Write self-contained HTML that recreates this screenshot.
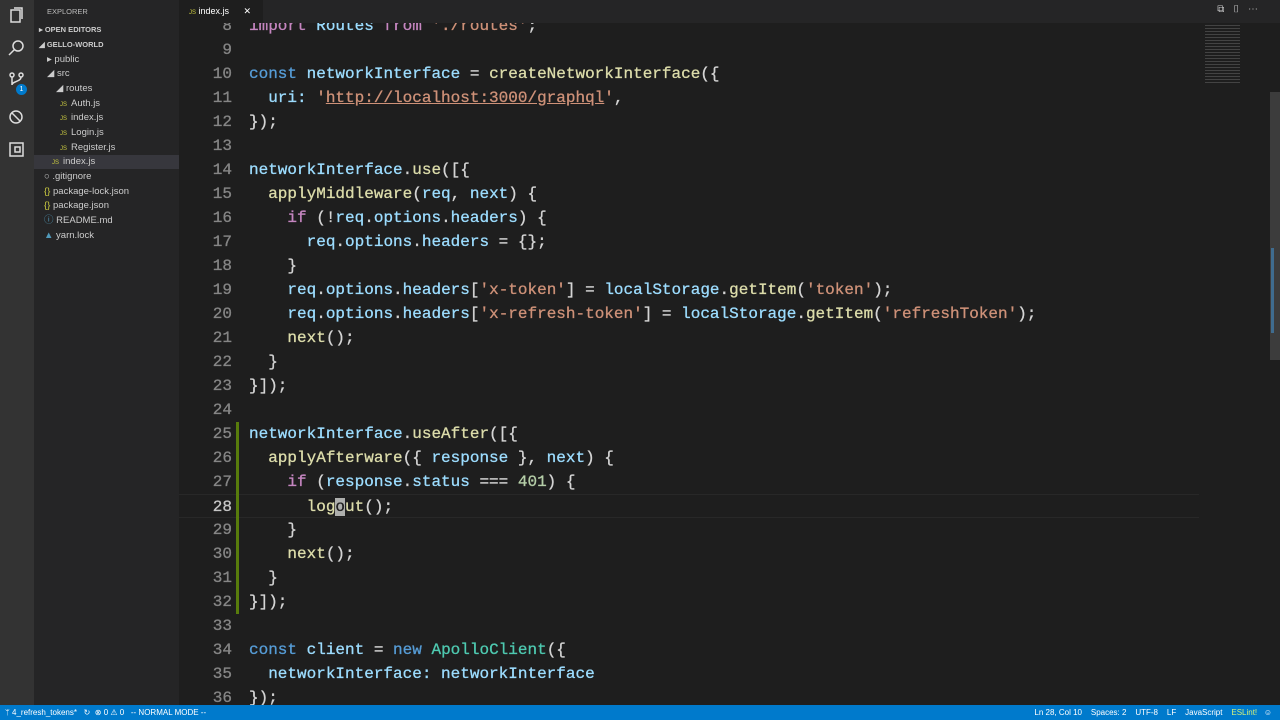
<!DOCTYPE html>
<html><head><meta charset="utf-8"><style>
*{margin:0;padding:0;box-sizing:border-box}
body{width:1280px;height:720px;overflow:hidden;background:#1e1e1e;font-family:"Liberation Sans",sans-serif;position:relative}
#act{position:absolute;left:0;top:0;width:34px;height:705px;background:#333}
#side{position:absolute;left:34px;top:0;width:145px;height:705px;background:#252526;color:#ccc;font-size:9.5px}
#side div{position:absolute;white-space:nowrap;height:14px;line-height:14px}
.j{color:#cbcb41;font-size:6px;margin-right:4px}
#tabs{position:absolute;left:179px;top:0;width:1101px;height:23px;background:#252526}
#tab{position:absolute;left:0;top:0;width:84px;height:23px;background:#1e1e1e;color:#fff;font-size:9px;line-height:23px;padding-left:10px}
#code{position:absolute;left:179px;top:14px;width:1020px;font-family:"Liberation Mono",monospace;font-size:16px;line-height:24px;color:#d4d4d4;-webkit-text-stroke:0.3px currentColor}
.l{height:24px;white-space:pre;position:relative}
.n{display:inline-block;width:53px;text-align:right;color:#858585;margin-right:17px}
.k{color:#569cd6}.v{color:#9cdcfe}.f{color:#dcdcaa}.s{color:#ce9178}.p{color:#c586c0}.m{color:#b5cea8}.c{color:#4ec9b0}
#status{position:absolute;left:0;top:705px;width:1280px;height:15px;background:#007acc;color:#fff;font-size:8px;line-height:15px}
</style></head><body>
<div id="act">
<svg width="34" height="170" fill="none" stroke="#ddd" stroke-width="1.5">
<rect x="11" y="10" width="9" height="12"/><path d="M14 8h8v11"/>
<circle cx="18" cy="46" r="5"/><path d="M14 50l-5 5"/>
<circle cx="12" cy="75" r="2"/><circle cx="21" cy="75" r="2"/><path d="M12 77v8M21 77c0 5-9 4-9 8"/>
<circle cx="16" cy="117" r="6"/><path d="M12 113l8 8"/>
<rect x="10" y="143" width="13" height="13"/><rect x="15" y="147" width="5" height="5"/>
</svg>
<div style="position:absolute;left:16px;top:84px;width:11px;height:11px;border-radius:50%;background:#007acc;color:#fff;font-size:7px;text-align:center;line-height:11px">1</div>
</div>
<div id="side">
<div style="left:13px;top:5px;color:#bbb;font-size:7.5px">EXPLORER</div>
<div style="left:5px;top:23px;font-weight:bold;font-size:7.5px">▸ OPEN EDITORS</div>
<div style="left:5px;top:38px;font-weight:bold;font-size:7.5px">◢ GELLO-WORLD</div>
<div style="left:13px;top:53px">▸ public</div>
<div style="left:13px;top:67px">◢ src</div>
<div style="left:22px;top:82px">◢ routes</div>
<div style="left:26px;top:97px"><span class="j">JS</span>Auth.js</div>
<div style="left:26px;top:111px"><span class="j">JS</span>index.js</div>
<div style="left:26px;top:126px"><span class="j">JS</span>Login.js</div>
<div style="left:26px;top:141px"><span class="j">JS</span>Register.js</div>
<div style="left:0;top:155px;width:145px;background:#37373d;padding-left:18px"><span class="j">JS</span>index.js</div>
<div style="left:10px;top:170px">○ .gitignore</div>
<div style="left:10px;top:185px"><span style="color:#cbcb41">{}</span> package-lock.json</div>
<div style="left:10px;top:199px"><span style="color:#cbcb41">{}</span> package.json</div>
<div style="left:10px;top:214px"><span style="color:#519aba">ⓘ</span> README.md</div>
<div style="left:10px;top:229px"><span style="color:#519aba">▲</span> yarn.lock</div>
</div>
<div id="code">
<div class="l"><span class="n">8</span><span class="p">import</span> <span class="v">Routes</span> <span class="p">from</span> <span class="s">'./routes'</span>;</div>
<div class="l"><span class="n">9</span></div>
<div class="l"><span class="n">10</span><span class="k">const</span> <span class="v">networkInterface</span> = <span class="f">createNetworkInterface</span>({</div>
<div class="l"><span class="n">11</span>  <span class="v">uri:</span> <span class="s">'<u>http://localhost:3000/graphql</u>'</span>,</div>
<div class="l"><span class="n">12</span>});</div>
<div class="l"><span class="n">13</span></div>
<div class="l"><span class="n">14</span><span class="v">networkInterface</span>.<span class="f">use</span>([{</div>
<div class="l"><span class="n">15</span>  <span class="f">applyMiddleware</span>(<span class="v">req</span>, <span class="v">next</span>) {</div>
<div class="l"><span class="n">16</span>    <span class="p">if</span> (!<span class="v">req</span>.<span class="v">options</span>.<span class="v">headers</span>) {</div>
<div class="l"><span class="n">17</span>      <span class="v">req</span>.<span class="v">options</span>.<span class="v">headers</span> = {};</div>
<div class="l"><span class="n">18</span>    }</div>
<div class="l"><span class="n">19</span>    <span class="v">req</span>.<span class="v">options</span>.<span class="v">headers</span>[<span class="s">'x-token'</span>] = <span class="v">localStorage</span>.<span class="f">getItem</span>(<span class="s">'token'</span>);</div>
<div class="l"><span class="n">20</span>    <span class="v">req</span>.<span class="v">options</span>.<span class="v">headers</span>[<span class="s">'x-refresh-token'</span>] = <span class="v">localStorage</span>.<span class="f">getItem</span>(<span class="s">'refreshToken'</span>);</div>
<div class="l"><span class="n">21</span>    <span class="f">next</span>();</div>
<div class="l"><span class="n">22</span>  }</div>
<div class="l"><span class="n">23</span>}]);</div>
<div class="l"><span class="n">24</span></div>
<div class="l"><span class="n">25</span><span class="v">networkInterface</span>.<span class="f">useAfter</span>([{</div>
<div class="l"><span class="n">26</span>  <span class="f">applyAfterware</span>({ <span class="v">response</span> }, <span class="v">next</span>) {</div>
<div class="l"><span class="n">27</span>    <span class="p">if</span> (<span class="v">response</span>.<span class="v">status</span> === <span class="m">401</span>) {</div>
<div class="l" style="border-top:1px solid #282828;border-bottom:1px solid #282828"><span class="n" style="color:#c6c6c6">28</span>      <span class="f">log<span style="background:#aeafad;color:#1e1e1e">o</span>ut</span>();</div>
<div class="l"><span class="n">29</span>    }</div>
<div class="l"><span class="n">30</span>    <span class="f">next</span>();</div>
<div class="l"><span class="n">31</span>  }</div>
<div class="l"><span class="n">32</span>}]);</div>
<div class="l"><span class="n">33</span></div>
<div class="l"><span class="n">34</span><span class="k">const</span> <span class="v">client</span> = <span class="k">new</span> <span class="c">ApolloClient</span>({</div>
<div class="l"><span class="n">35</span>  <span class="v">networkInterface:</span> <span class="v">networkInterface</span></div>
<div class="l"><span class="n">36</span>});</div>
</div>
<div style="position:absolute;left:236px;top:422px;width:3px;height:192px;background:#587c0c"></div>
<div id="tabs"><div id="tab"><span style="color:#cbcb41;font-size:6px">JS</span> index.js <span style="margin-left:12px">✕</span></div>
<div style="position:absolute;right:14px;top:4px;color:#ccc;font-size:10px;letter-spacing:8px">⧉▯⋯</div></div>
<div style="position:absolute;left:1205px;top:23px;width:50px;height:60px;opacity:.35;background:repeating-linear-gradient(#1e1e1e 0 2px,#888 2px 3px);clip-path:polygon(0 0,70% 0,70% 100%,0 100%)"></div>
<div style="position:absolute;left:1270px;top:92px;width:10px;height:268px;background:#3c3c3c"></div>
<div style="position:absolute;left:1271px;top:248px;width:3px;height:85px;background:#3f6c8f"></div>
<div id="status">
<span style="position:absolute;left:5px">ᛘ 4_refresh_tokens*&nbsp;&nbsp; ↻ &nbsp;⊗ 0 ⚠ 0 &nbsp;&nbsp;-- NORMAL MODE --</span>
<span style="position:absolute;right:8px">Ln 28, Col 10 &nbsp;&nbsp; Spaces: 2 &nbsp;&nbsp; UTF-8 &nbsp;&nbsp; LF &nbsp;&nbsp; JavaScript &nbsp;&nbsp; <span style="color:#d4f07a">ESLint!</span> &nbsp; ☺</span>
</div>
</body></html>
